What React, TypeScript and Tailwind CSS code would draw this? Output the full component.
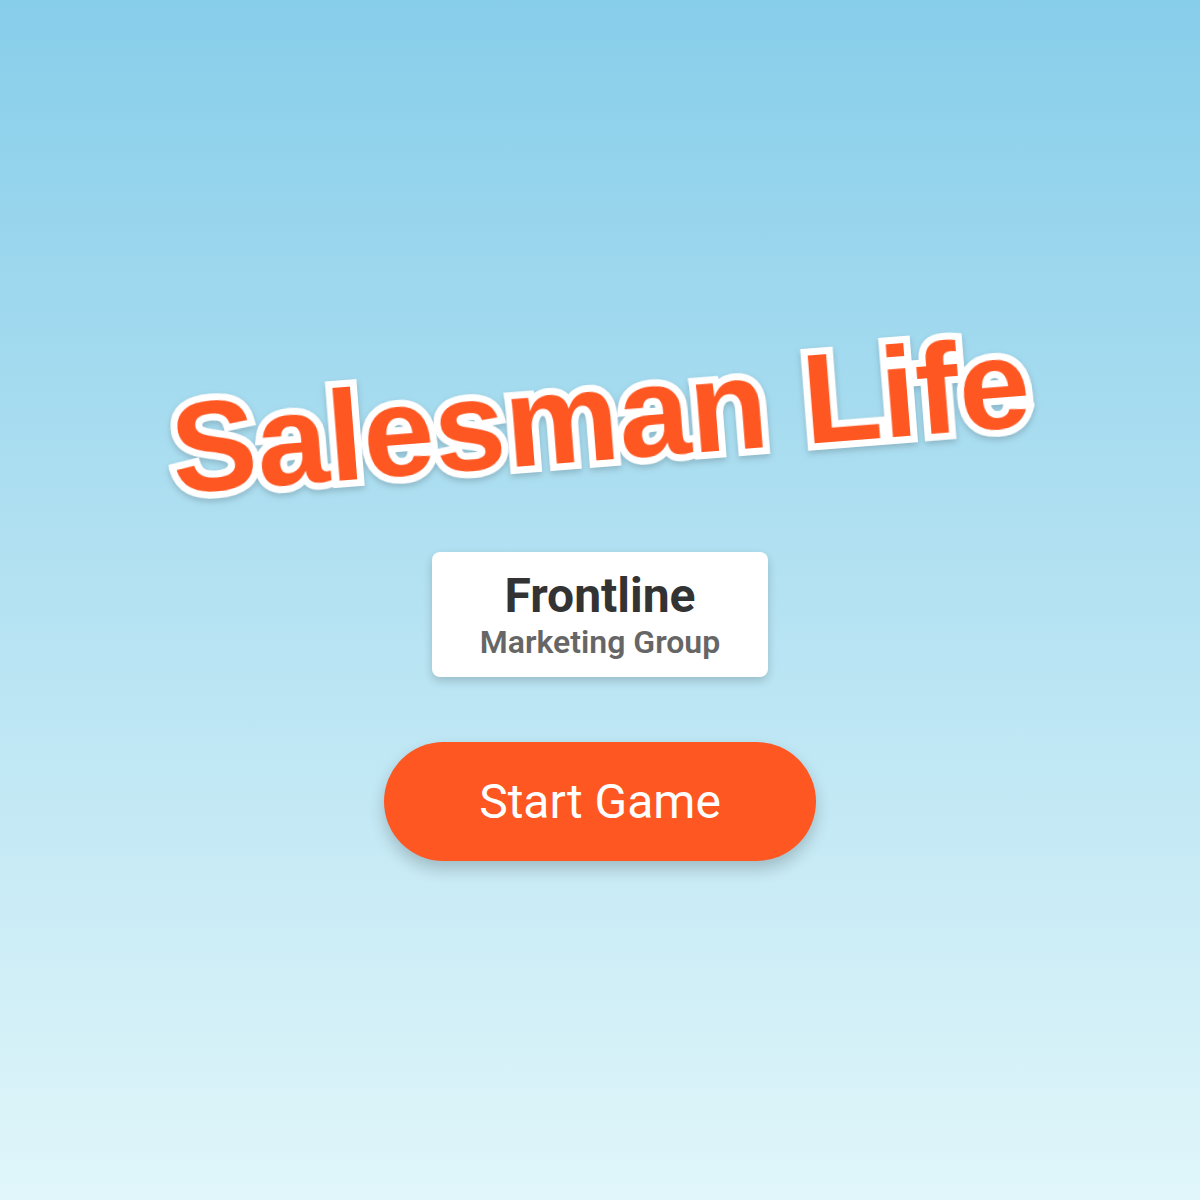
const App = () => {
  return (
    <main className="flex flex-col items-center w-full h-[1200px] pt-[352px] bg-gradient-to-b from-[#87ceea] to-[#e0f6fa] font-['Roboto',sans-serif]">
      {/* タイトル */}
      <h1 className="-rotate-[4.5deg] font-['Liberation_Sans',Arial,sans-serif] font-bold text-[128px] leading-none text-[#ff5722] [-webkit-text-stroke:14px_white] [paint-order:stroke_fill] drop-shadow-[0_3px_3px_rgba(0,0,0,0.18)]">
        Salesman Life
      </h1>
      {/* ロゴ */}
      <div className="mt-[72px] flex flex-col items-center w-[336px] h-[125px] pt-[20px] bg-white rounded-lg shadow-[0_4px_10px_rgba(0,0,0,0.18)]">
        <div className="text-[48px] leading-[48px] font-bold text-[#333]">Frontline</div>
        <div className="mt-[4px] text-[32px] leading-[36px] font-semibold text-[#666]">Marketing Group</div>
      </div>
      {/* スタートボタン */}
      <button className="mt-[65px] w-[432px] h-[119px] rounded-full bg-[#ff5722] text-white text-[48px] shadow-[0_8px_16px_rgba(0,0,0,0.2)]">
        Start Game
      </button>
    </main>
  );
};

export default App;
